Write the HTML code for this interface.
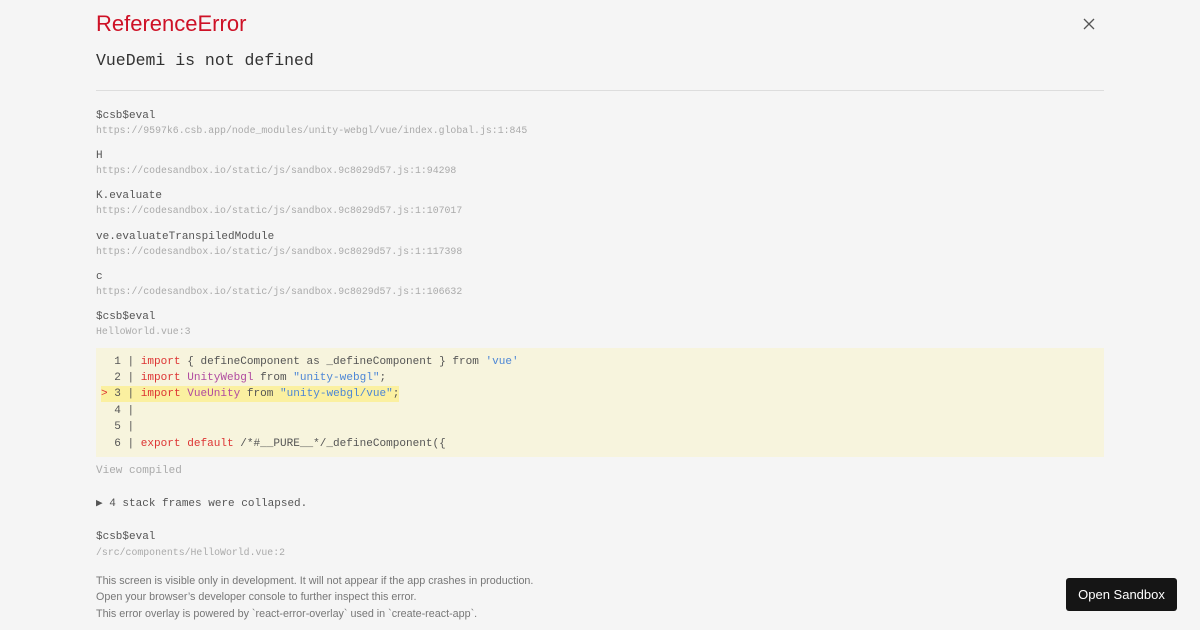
<!DOCTYPE html>
<html><head><style>
body{margin:0;width:1200px;height:630px;background:#f5f5f5;position:relative;overflow:hidden;font-family:"Liberation Mono",monospace;}
.a{position:absolute;white-space:pre;line-height:1;}
.fn{font-size:11px;color:#555;left:96px}
.url{font-size:9.85px;color:#aaa;left:96px}
.code{position:absolute;left:96px;top:348px;width:1008px;height:109px;background:#f7f4dd;}
.cl{position:absolute;left:5px;font-size:11.05px;color:#555;white-space:pre;line-height:16px;height:16px}
.r{color:#d33;} .p{color:#b04aa0;} .b{color:#4c86d6;}
.hl{background:#fbf0a0}
.ft{font-family:"Liberation Sans",sans-serif;font-size:10.75px;color:#777;left:96px}
</style></head><body>
<div class="a" style="left:96px;top:13px;font-family:'Liberation Sans',sans-serif;font-size:22px;color:#ce1126">ReferenceError</div>
<div class="a" style="left:96px;top:53px;font-size:16.5px;color:#333">VueDemi is not defined</div>
<svg style="position:absolute;left:1083px;top:18px" width="12" height="12"><path d="M1 1L11 11M11 1L1 11" stroke="#555" stroke-width="1.3"/></svg>
<div style="position:absolute;left:96px;top:90px;width:1008px;height:1px;background:#ddd"></div>

<div class="a fn" style="top:111px">$csb$eval</div>
<div class="a url" style="top:126px">https://9597k6.csb.app/node_modules/unity-webgl/vue/index.global.js:1:845</div>
<div class="a fn" style="top:151px">H</div>
<div class="a url" style="top:166px">https://codesandbox.io/static/js/sandbox.9c8029d57.js:1:94298</div>
<div class="a fn" style="top:191px">K.evaluate</div>
<div class="a url" style="top:206px">https://codesandbox.io/static/js/sandbox.9c8029d57.js:1:107017</div>
<div class="a fn" style="top:232px">ve.evaluateTranspiledModule</div>
<div class="a url" style="top:247px">https://codesandbox.io/static/js/sandbox.9c8029d57.js:1:117398</div>
<div class="a fn" style="top:272px">c</div>
<div class="a url" style="top:287px">https://codesandbox.io/static/js/sandbox.9c8029d57.js:1:106632</div>
<div class="a fn" style="top:312px">$csb$eval</div>
<div class="a url" style="top:327px">HelloWorld.vue:3</div>

<div class="code">
<div class="cl" style="top:6px">  1 | <span class="r">import</span> { defineComponent as _defineComponent } from <span class="b">'vue'</span></div>
<div class="cl" style="top:22px">  2 | <span class="r">import</span> <span class="p">UnityWebgl</span> from <span class="b">"unity-webgl"</span>;</div>
<div class="cl hl" style="top:38px"><span class="r">&gt;</span> 3 | <span class="r">import</span> <span class="p">VueUnity</span> from <span class="b">"unity-webgl/vue"</span>;</div>
<div class="cl" style="top:55px">  4 |</div>
<div class="cl" style="top:71px">  5 |</div>
<div class="cl" style="top:88px">  6 | <span class="r">export</span> <span class="r">default</span> /*#__PURE__*/_defineComponent({</div>
</div>
<div class="a" style="left:96px;top:466px;font-size:11px;color:#aaa">View compiled</div>
<div class="a" style="left:96px;top:499px;font-size:11px;color:#555">▶ 4 stack frames were collapsed.</div>

<div class="a fn" style="top:532px">$csb$eval</div>
<div class="a url" style="top:548px">/src/components/HelloWorld.vue:2</div>

<div class="a ft" style="top:576px">This screen is visible only in development. It will not appear if the app crashes in production.</div>
<div class="a ft" style="top:592px">Open your browser’s developer console to further inspect this error.</div>
<div class="a ft" style="top:609px">This error overlay is powered by `react-error-overlay` used in `create-react-app`.</div>

<div style="position:absolute;left:1066px;top:578px;width:111px;height:33px;background:#151515;border-radius:3px;color:#fff;font-family:'Liberation Sans',sans-serif;font-size:13px;line-height:33px;text-align:center">Open Sandbox</div>
</body></html>
